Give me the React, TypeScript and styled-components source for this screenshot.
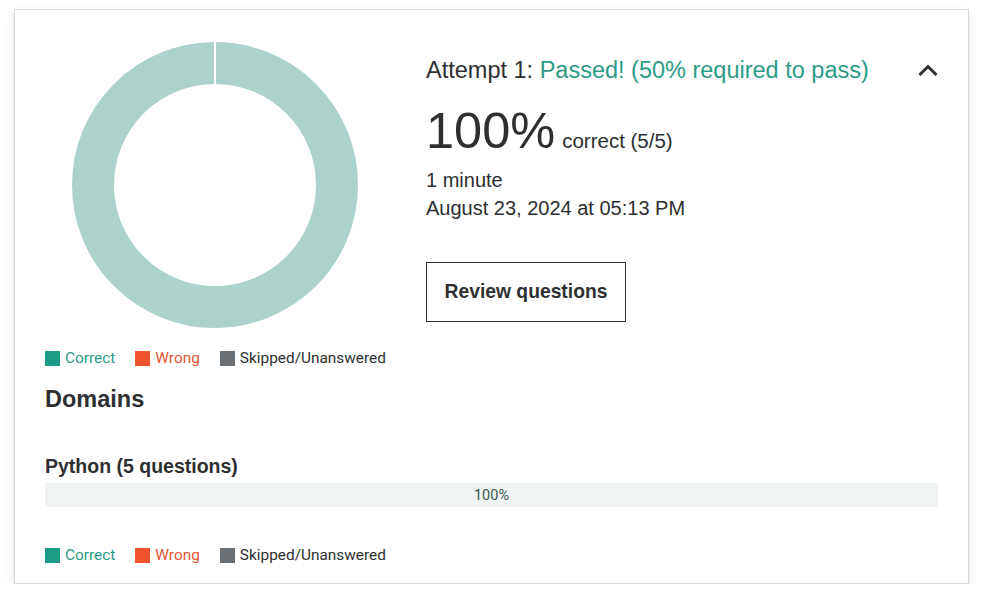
import React from "react";
import styled, { createGlobalStyle } from "styled-components";

const GlobalStyle = createGlobalStyle`
  html, body { margin: 0; padding: 0; background: #ffffff; }
  body { font-family: "Liberation Sans", Arial, sans-serif; color: #2d2f31; }
  * { box-sizing: border-box; }
`;

const Page = styled.div`
  padding: 9px 0 0 14px;
`;

const Card = styled.section`
  width: 955px;
  height: 575px;
  border: 1px solid #d1d7dc;
  background: #fff;
  box-shadow: 0 2px 4px rgba(0, 0, 0, 0.06), 0 4px 12px rgba(0, 0, 0, 0.07);
  padding: 32px 30px 0 30px;
`;

const Top = styled.div`
  display: flex;
  align-items: flex-start;
`;

const LeftCol = styled.div`
  width: 340px;
  display: flex;
  flex-direction: column;
  align-items: center;
`;

const RightCol = styled.div`
  flex: 1;
  margin-left: 41px;
  padding-top: 14px;
`;

const HeaderRow = styled.div`
  display: flex;
  align-items: center;
  justify-content: space-between;
`;

const Title = styled.h2`
  margin: 0;
  font-size: 23.5px;
  line-height: 28px;
  font-weight: 400;
  color: #2d2f31;
`;

const Pass = styled.span`
  color: #2b9b86;
`;

const Toggle = styled.button`
  border: 0;
  background: none;
  padding: 0;
  display: flex;
  cursor: pointer;
`;

const ScoreRow = styled.div`
  display: flex;
  align-items: baseline;
  margin-top: 22px;
`;

const Big = styled.span`
  font-size: 50.5px;
  line-height: 50px;
  color: #2d2f31;
`;

const Small = styled.span`
  font-size: 20.5px;
  margin-left: 7px;
  color: #2d2f31;
`;

const Meta = styled.div`
  margin-top: 10px;
  font-size: 20px;
  line-height: 28px;
`;

const ReviewButton = styled.button`
  margin-top: 40px;
  width: 200px;
  height: 60px;
  border: 1px solid #2d2f31;
  background: #fff;
  font-family: "Liberation Sans", Arial, sans-serif;
  font-weight: 700;
  font-size: 19.3px;
  color: #2d2f31;
  cursor: pointer;
`;

const Legend = styled.div<{ $mt: number }>`
  display: flex;
  align-items: center;
  gap: 20px;
  margin-top: ${(p) => p.$mt}px;
  align-self: flex-start;
`;

const LegendItem = styled.div<{ $color: string }>`
  display: flex;
  align-items: center;
  gap: 5px;
  font-family: Roboto, "Liberation Sans", sans-serif;
  font-size: 15.4px;
  line-height: 18px;
  color: ${(p) => p.$color};
`;

const Swatch = styled.span<{ $color: string }>`
  width: 15px;
  height: 15px;
  background: ${(p) => p.$color};
`;

const Domains = styled.h3`
  margin: 18px 0 0 0;
  font-size: 23.5px;
  line-height: 28px;
  font-weight: 700;
`;

const DomainName = styled.h4`
  margin: 41px 0 0 0;
  font-size: 19.5px;
  line-height: 24px;
  font-weight: 700;
`;

const Bar = styled.div`
  margin-top: 5px;
  height: 24px;
  background: #f1f4f3;
  position: relative;
`;

const BarFill = styled.div`
  height: 100%;
  background: #eff4f2;
  display: flex;
  align-items: center;
  justify-content: center;
  font-family: Roboto, "Liberation Sans", sans-serif;
  font-size: 14.5px;
  color: #3e5552;
`;

const LegendBlock = () => (
  <>
    <LegendItem $color="#2b9b86">
      <Swatch $color="#1c9b86" />
      Correct
    </LegendItem>
    <LegendItem $color="#e35533">
      <Swatch $color="#f0532d" />
      Wrong
    </LegendItem>
    <LegendItem $color="#2d2f31">
      <Swatch $color="#6a6f73" />
      Skipped/Unanswered
    </LegendItem>
  </>
);

const Donut = () => (
  <svg width="286" height="286" viewBox="0 0 286 286">
    <circle cx="143" cy="143" r="122" fill="none" stroke="#abd3cb" strokeWidth="42" />
    <rect x="142" y="0" width="2" height="43" fill="#ffffff" />
  </svg>
);

export default function App() {
  const pct = 100;
  return (
    <>
      <GlobalStyle />
      <Page>
        <Card>
          <Top>
            <LeftCol>
              <Donut />
              <Legend $mt={21}>
                <LegendBlock />
              </Legend>
            </LeftCol>
            <RightCol>
              <HeaderRow>
                <Title>
                  Attempt 1: <Pass>Passed! (50% required to pass)</Pass>
                </Title>
                <Toggle aria-label="Collapse">
                  <svg width="20" height="14" viewBox="0 0 20 14">
                    <polyline
                      points="1.5,12 10,3.5 18.5,12"
                      fill="none"
                      stroke="#2d2f31"
                      strokeWidth="3"
                    />
                  </svg>
                </Toggle>
              </HeaderRow>
              <ScoreRow>
                <Big>100%</Big>
                <Small>correct (5/5)</Small>
              </ScoreRow>
              <Meta>
                <div>1 minute</div>
                <div>August 23, 2024 at 05:13 PM</div>
              </Meta>
              <ReviewButton>Review questions</ReviewButton>
            </RightCol>
          </Top>
          <Domains>Domains</Domains>
          <DomainName>Python (5 questions)</DomainName>
          <Bar>
            <BarFill style={{ width: `${pct}%` }}>100%</BarFill>
          </Bar>
          <Legend $mt={39}>
            <LegendBlock />
          </Legend>
        </Card>
      </Page>
    </>
  );
}
